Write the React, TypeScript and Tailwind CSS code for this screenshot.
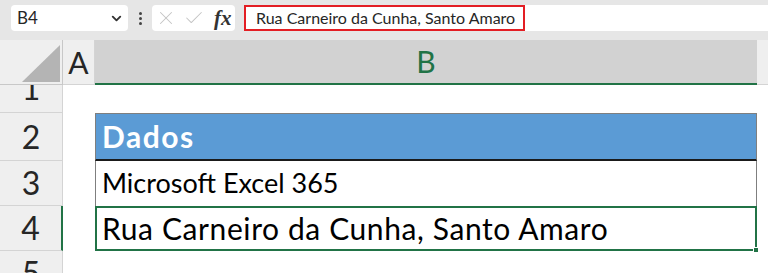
import { Check, ChevronDown, X } from 'lucide-react';

const rowHeader = 'flex w-[63px] shrink-0 items-center justify-center border-r border-b border-[#d4d4d4] bg-[#efefef] text-[32px] text-[#262626]';

export default function App() {
    return (
        <div className="h-[273px] w-[768px] overflow-hidden bg-white font-['Lato','Noto_Sans',sans-serif]">
            {/* formula bar */}
            <div className="flex h-[40px] items-start bg-[#e6e6e6] pt-[5px] pl-[11px]">
                <div className="flex h-[26px] w-[117px] items-center justify-between rounded-[4px] bg-white pr-[4px] pl-[6px]">
                    <span className="text-[17px] text-[#262626]">B4</span>
                    <ChevronDown className="size-[15px] text-[#333]" strokeWidth={3} />
                </div>
                <div className="ml-[10px] flex h-[26px] w-[5px] flex-col items-center justify-center gap-[2px]">
                    <span className="size-[3px] rounded-full bg-[#444]" />
                    <span className="size-[3px] rounded-full bg-[#444]" />
                    <span className="size-[3px] rounded-full bg-[#444]" />
                </div>
                <div className="ml-[9px] flex h-[26px] w-[83px] items-center gap-[6px] rounded-[4px] bg-white pl-[3px]">
                    <X className="size-[22px] text-[#c4c4c4]" strokeWidth={1.1} />
                    <Check className="size-[22px] text-[#c4c4c4]" strokeWidth={1.1} />
                    <span className="ml-[3px] font-['Liberation_Serif',serif] text-[21px] leading-none font-bold italic text-[#333]">fx</span>
                </div>
                <div className="ml-[9px] flex h-[26px] flex-1 bg-white">
                    <div className="flex h-[26px] w-[281px] items-center border-2 border-[#e31e24] pl-[10px] text-[16px] whitespace-nowrap text-[#262626]">
                        Rua Carneiro da Cunha, Santo Amaro
                    </div>
                </div>
            </div>

            {/* column headers */}
            <div className="flex h-[45px]">
                <div className="relative w-[63px] shrink-0 border-r border-b border-[#c8c8c8] bg-[#efefef]">
                    <svg className="absolute inset-0" width="63" height="45">
                        <polygon points="22,42 60,42 60,5" fill="#b4b4b4" />
                    </svg>
                </div>
                <div className="flex w-[32px] shrink-0 items-center justify-center border-r border-b border-[#d4d4d4] bg-[#efefef] text-[30px] text-[#262626]">
                    A
                </div>
                <div className="flex w-[662px] shrink-0 items-center justify-center border-b-2 border-[#217346] bg-[#d2d2d2] text-[30px] text-[#217346]">
                    B
                </div>
                <div className="flex-1 border-b border-[#d4d4d4] bg-[#efefef]" />
            </div>

            {/* row 1, scrolled partly out of view */}
            <div className="flex h-[28px]">
                <div className={rowHeader + ' items-end overflow-hidden'}>
                    <div className="flex h-[48px] shrink-0 items-center justify-center">1</div>
                </div>
                <div className="flex-1" />
            </div>

            {/* row 2 */}
            <div className="flex h-[48px]">
                <div className={rowHeader}>2</div>
                <div className="w-[32px] shrink-0" />
                <div className="flex w-[662px] items-center border border-b-2 border-[#7f7f7f] border-b-[#1a1a1a] bg-[#5b9bd5] pl-[6px] text-[30px] font-bold tracking-[1.5px] text-white">
                    Dados
                </div>
            </div>

            {/* row 3 */}
            <div className="flex h-[45px]">
                <div className={rowHeader}>3</div>
                <div className="w-[32px] shrink-0" />
                <div className="flex w-[662px] items-center border-x border-[#7f7f7f] pl-[6px] text-[27px] text-black">
                    Microsoft Excel 365
                </div>
            </div>

            {/* row 4, selected */}
            <div className="flex h-[45px]">
                <div className={rowHeader + ' border-r-2 border-r-[#217346] bg-[#d2d2d2] text-[#217346]'}>4</div>
                <div className="w-[32px] shrink-0" />
                <div className="relative flex w-[662px] items-center border-2 border-[#217346] pl-[5px] text-[30px] tracking-[0.6px] whitespace-nowrap text-black">
                    Rua Carneiro da Cunha, Santo Amaro
                    <span className="absolute -right-[4px] -bottom-[4px] size-[6px] border border-white bg-[#217346]" />
                </div>
            </div>

            {/* row 5 */}
            <div className="flex h-[45px]">
                <div className={rowHeader}>5</div>
                <div className="flex-1" />
            </div>
        </div>
    );
}
